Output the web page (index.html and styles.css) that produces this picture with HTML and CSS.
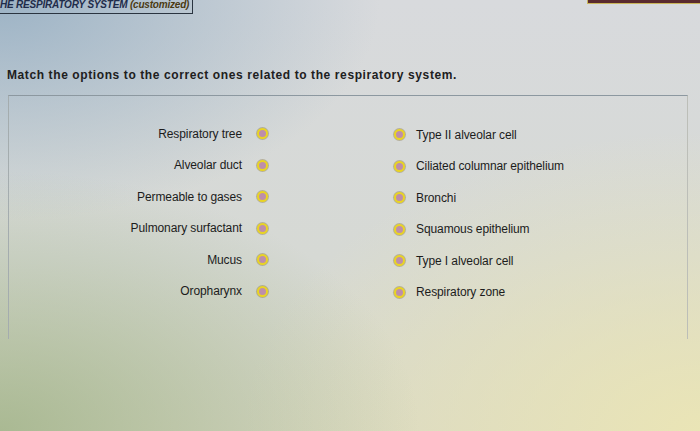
FILE: index.html
```html
<!DOCTYPE html>
<html lang="en">
<head>
    <meta charset="UTF-8">
    <meta name="viewport" content="width=device-width, initial-scale=1.0">
    <title>The Respiratory System</title>
    <link rel="stylesheet" href="styles.css">
</head>
<body>
    <div class="screen">
        <div class="topBar">
            <div class="titleBox">
                <span class="titleText">HE RESPIRATORY SYSTEM <em>(customized)</em></span>
            </div>
            <div class="accentBar"></div>
        </div>

        <p class="question">Match the options to the correct ones related to the respiratory system.</p>

        <div class="panel">
            <div class="matchCol leftCol">
                <label class="item"><span>Respiratory tree</span><span class="dot"></span></label>
                <label class="item"><span>Alveolar duct</span><span class="dot"></span></label>
                <label class="item"><span>Permeable to gases</span><span class="dot"></span></label>
                <label class="item"><span>Pulmonary surfactant</span><span class="dot"></span></label>
                <label class="item"><span>Mucus</span><span class="dot"></span></label>
                <label class="item"><span>Oropharynx</span><span class="dot"></span></label>
            </div>
            <div class="matchCol rightCol">
                <label class="item"><span class="dot"></span><span>Type II alveolar cell</span></label>
                <label class="item"><span class="dot"></span><span>Ciliated columnar epithelium</span></label>
                <label class="item"><span class="dot"></span><span>Bronchi</span></label>
                <label class="item"><span class="dot"></span><span>Squamous epithelium</span></label>
                <label class="item"><span class="dot"></span><span>Type I alveolar cell</span></label>
                <label class="item"><span class="dot"></span><span>Respiratory zone</span></label>
            </div>
        </div>
    </div>
</body>
</html>
```

FILE: styles.css
```css
html, body{
    margin: 0;
    height: 100%;
}
body{
    font-family: "Liberation Sans", Arial, sans-serif;
    color: #1c1c1c;
    overflow: hidden;
}
.screen{
    height: 431px;
    background:
        radial-gradient(ellipse 420px 260px at 0% 100%, rgba(150, 172, 125, 0.7), rgba(150, 172, 125, 0) 100%),
        radial-gradient(ellipse 460px 300px at 100% 100%, rgba(236, 230, 180, 0.9), rgba(236, 230, 180, 0) 100%),
        radial-gradient(ellipse 380px 220px at 0% 0%, rgba(150, 175, 195, 0.9), rgba(150, 175, 195, 0) 100%),
        linear-gradient(180deg, #d8dadd 0%, #d6d9d4 60%, #d8d8c6 100%);
}
.topBar{
    display: flex;
    justify-content: space-between;
    align-items: flex-start;
}
.titleBox{
    width: 192px;
    height: 13px;
    overflow: hidden;
    border-right: 1px solid #2a3440;
    border-bottom: 1px solid #2a3440;
}
.titleText{
    display: block;
    margin-top: -1px;
    font-size: 10px;
    line-height: 11px;
    font-weight: bold;
    font-style: italic;
    letter-spacing: -0.2px;
    color: #1f2c4a;
    white-space: nowrap;
}
.titleText em{
    color: #4a3a12;
}
.accentBar{
    width: 112px;
    height: 3px;
    background: #5a2a2e;
    border-left: 1px solid #c9b65a;
    border-bottom: 1px solid #c9b65a;
}
.question{
    margin: 54px 0 0 7px;
    font-size: 12px;
    line-height: 14px;
    font-weight: bold;
    letter-spacing: 0.6px;
    color: #202020;
}
.panel{
    display: flex;
    gap: 126px;
    height: 222px;
    margin: 13px 12px 0 8px;
    padding-top: 21px;
    border-top: 1px solid #8c98a0;
    border-left: 1px solid #a4acae;
    border-right: 1px solid #bcbeb8;
}
.matchCol{
    display: flex;
    flex-direction: column;
}
.leftCol{
    width: 259px;
    align-items: flex-end;
    padding-top: 1px;
}
.rightCol{
    padding-top: 2px;
}
.item{
    display: flex;
    align-items: center;
    height: 31.5px;
    font-size: 12px;
    letter-spacing: -0.1px;
}
.leftCol .item{
    gap: 15px;
}
.rightCol .item{
    gap: 11px;
}
.dot{
    width: 7px;
    height: 7px;
    border-radius: 50%;
    background: #bd8eab;
    border: 2px solid #e9d423;
    box-shadow: 0 0 0 1px rgba(120, 100, 40, 0.35);
}
```
